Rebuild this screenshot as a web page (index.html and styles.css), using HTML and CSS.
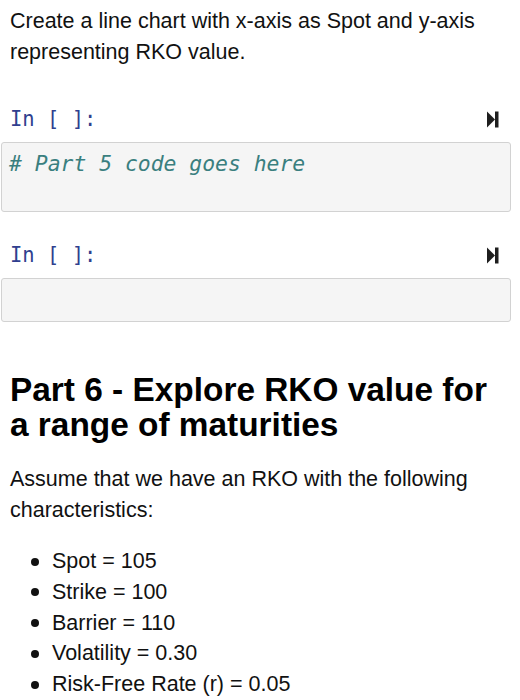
FILE: index.html
```html
<!DOCTYPE html>
<html>
<head>
<meta charset="utf-8">
<link rel="stylesheet" href="styles.css">
</head>
<body>
<div class="page">
  <p class="md intro">Create a line chart with x-axis as Spot and y-axis representing RKO value.</p>

  <div class="cell">
    <div class="prompt-row">
      <span class="prompt">In [ ]:</span>
      <svg class="run" width="12" height="17" viewBox="0 0 12 17"><path d="M0 0.5 L8 8.5 L0 16.5 Z" fill="#1e1e1e"/><rect x="8" y="0.5" width="3.5" height="16" fill="#1e1e1e"/></svg>
    </div>
    <div class="code"><span class="comment"># Part 5 code goes here</span></div>
  </div>

  <div class="cell">
    <div class="prompt-row">
      <span class="prompt">In [ ]:</span>
      <svg class="run" width="12" height="17" viewBox="0 0 12 17"><path d="M0 0.5 L8 8.5 L0 16.5 Z" fill="#1e1e1e"/><rect x="8" y="0.5" width="3.5" height="16" fill="#1e1e1e"/></svg>
    </div>
    <div class="code empty"></div>
  </div>

  <h2 class="heading">Part 6 - Explore RKO value for a range of maturities</h2>
  <p class="md">Assume that we have an RKO with the following characteristics:</p>
  <ul class="list">
    <li>Spot = 105</li>
    <li>Strike = 100</li>
    <li>Barrier = 110</li>
    <li>Volatility = 0.30</li>
    <li>Risk-Free Rate (r) = 0.05</li>
  </ul>
</div>
</body>
</html>
```
FILE: styles.css
```css
html, body {
  margin: 0;
  padding: 0;
  background: #fff;
}
.page {
  padding: 0 10px;
  font-family: "Liberation Sans", Arial, sans-serif;
  color: #111;
}
.md {
  font-size: 21.5px;
  line-height: 31px;
  margin: 22px 0 0 0;
}
.md.intro {
  margin: 6px 0 38px 0;
}
.cell {
  margin-top: 30px;
}
.prompt-row {
  display: flex;
  justify-content: space-between;
  align-items: center;
  padding-right: 11px;
  height: 26px;
}
.prompt {
  font-family: "DejaVu Sans Mono", monospace;
  font-size: 20.5px;
  color: #303f8f;
}
.run {
  display: block;
}
.code {
  margin: 10px 0 0 -9px;
  background: #f5f5f5;
  border: 1px solid #d2d2d2;
  border-radius: 3px;
  height: 70px;
  box-sizing: border-box;
  padding: 8px 7px 0 7px;
  width: 510px;
}
.code.empty {
  height: 44px;
}
.comment {
  font-family: "DejaVu Sans Mono", monospace;
  font-style: italic;
  font-size: 21.4px;
  color: #3a7f7f;
}
.heading {
  font-size: 33.4px;
  line-height: 35px;
  font-weight: bold;
  margin: 50px 0 0 0;
  color: #000;
}
.list {
  list-style: none;
  margin: 20px 0 0 0;
  padding: 0 0 0 42px;
  font-size: 21.5px;
  line-height: 30.75px;
}
.list li {
  position: relative;
}
.list li::before {
  content: "";
  position: absolute;
  left: -21px;
  top: 11.5px;
  width: 8px;
  height: 8px;
  border-radius: 50%;
  background: #111;
}
```
